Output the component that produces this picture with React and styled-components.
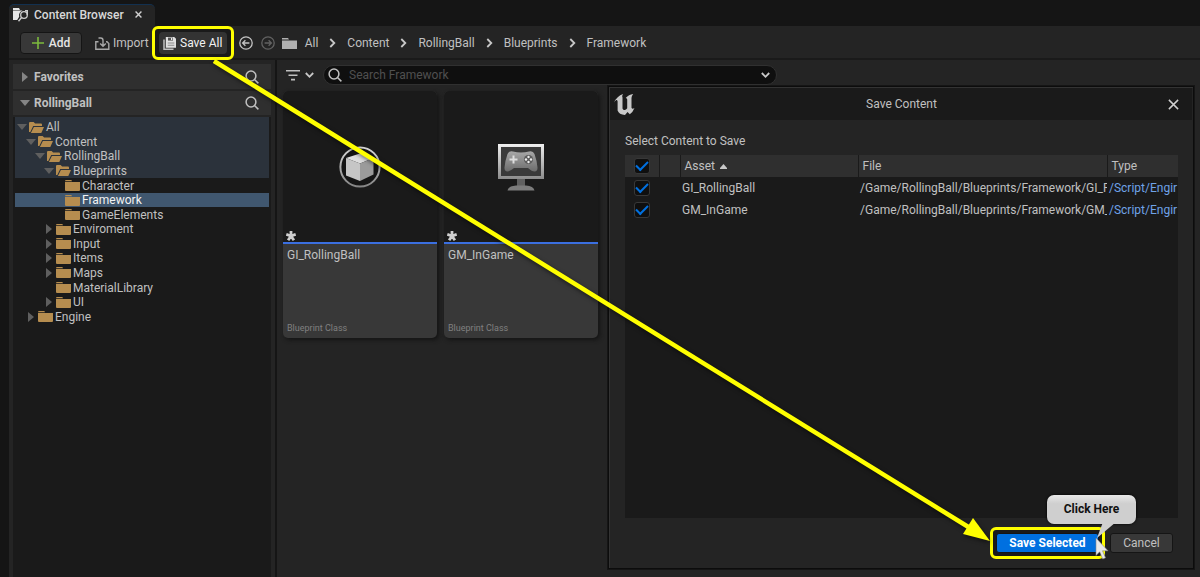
import React from "react";
import styled, { createGlobalStyle, css } from "styled-components";

const c = {
  black: "#151515",
  deep: "#1a1a1a",
  panel: "#242424",
  header: "#2f2f2f",
  text: "#c0c0c0",
  folder: "#b68d4f",
  blue: "#0070e0",
  mark: "#ffff00",
};

const GlobalStyle = createGlobalStyle`
  * { box-sizing: border-box; }
  body { margin: 0; background: ${c.black}; }
  body, button, input, table { font-family: Roboto, "Liberation Sans", sans-serif; font-size: 12px; line-height: 14px; color: ${c.text}; }
  svg { display: block; flex: none; }
`;

const Desktop = styled.div`
  position: relative;
  min-height: 100vh;
  display: flex;
  flex-direction: column;
  padding: 4px 0 0 9px;
  overflow: hidden;
`;
const TabStrip = styled.header`
  display: flex;
  height: 22px;
`;
const Tab = styled.div`
  display: flex;
  align-items: center;
  width: 146px;
  padding: 0 13px 2px 4px;
  gap: 5px;
  background: ${c.panel};
  border-top: 1px solid #12304f;
  border-radius: 5px 5px 0 0;
  color: #d8d8d8;
  font-weight: 500;
`;
const PlainButton = styled.button`
  display: flex;
  align-items: center;
  padding: 0;
  border: 0;
  background: none;
  color: inherit;
  ${(p) => p.$push && css`margin-left: auto;`}
`;
const Panel = styled.div`
  flex: 1;
  display: flex;
  flex-direction: column;
  background: ${c.panel};
`;
const Toolbar = styled.nav`
  display: flex;
  align-items: center;
  height: 34px;
  padding: 2px 11px 0;
  border-bottom: 2px solid ${c.deep};
`;
const ToolButton = styled.button`
  display: flex;
  align-items: center;
  justify-content: center;
  gap: 3px;
  height: 22px;
  padding: 0 2px 0 12px;
  border: 1px solid transparent;
  border-radius: 4px;
  background: none;
  color: ${c.text};
  ${(p) => p.$raised && css`
    width: 62px;
    gap: 5px;
    padding: 0;
    background: #383838;
    border-color: #151515;
    color: #e6e6e6;
    font-weight: 500;
  `}
  ${(p) => p.$active && css`
    width: 68px;
    gap: 4px;
    padding: 0;
    background: #333;
    color: #f2f2f2;
  `}
`;
const Highlight = styled.div`
  position: relative;
  flex: none;
  padding: ${(p) => p.$pad};
  border: 3px solid ${c.mark};
  border-radius: 6px;
  background: ${c.deep};
`;
const HistoryButtons = styled.div`
  display: flex;
  gap: 8px;
  margin: 0 7px 0 5px;
`;
const Crumbs = styled.div`
  display: flex;
  align-items: center;
  gap: 10px;
  margin-left: 8px;
`;
const Crumb = styled.a`
  color: ${c.text};
  text-decoration: none;
`;
const Body = styled.div`
  flex: 1;
  display: flex;
`;
const Sidebar = styled.aside`
  display: flex;
  flex-direction: column;
  width: 262px;
  margin: 4px 0 0 4px;
  padding-right: 4px;
`;
const Section = styled.div`
  display: flex;
  align-items: center;
  gap: 4px;
  height: ${(p) => p.$height};
  margin-bottom: 2px;
  padding: 0 12px 0 7px;
  background: ${c.header};
  font-weight: 700;
`;
const TreeWell = styled.div`
  flex: 1;
  padding: 0 2px;
  background: ${c.deep};
`;
const Tree = styled.ul`
  display: grid;
  grid-auto-rows: 1fr;
  height: 207px;
  margin: 0;
  padding: 0;
  border-top: 3px solid #2b323b;
  list-style: none;
`;
const TreeItem = styled.li`
  display: flex;
  align-items: center;
  gap: 2px;
  padding-left: ${(p) => 2 + p.$depth * 9}px;
  background: ${(p) => (p.$state === "open" ? "#2b323b" : p.$state === "current" ? "#40576f" : "none")};
  color: ${(p) => (p.$state === "current" ? "#f2f2f2" : c.text)};
`;
const Twist = styled.span`
  width: 10px;
  display: flex;
`;
const Content = styled.main`
  flex: 1;
  border-left: 2px solid ${c.black};
  padding: 5px 6px;
`;
const FilterBar = styled.div`
  display: flex;
  align-items: center;
  gap: 5px;
  height: 20px;
  padding-left: 3px;
`;
const SearchBox = styled.label`
  display: flex;
  align-items: center;
  gap: 7px;
  width: 454px;
  height: 20px;
  margin-left: 4px;
  padding: 0 6px 0 4px;
  border: 1px solid #303030;
  border-radius: 10px;
  background: #0f0f0f;
`;
const SearchInput = styled.input`
  flex: 1;
  min-width: 0;
  padding: 0;
  border: 0;
  outline: 0;
  background: none;
  &::placeholder { color: #505050; opacity: 1; }
`;
const Tiles = styled.div`
  display: flex;
  gap: 7px;
  margin-top: 6px;
`;
const Tile = styled.article`
  display: flex;
  flex-direction: column;
  width: 154px;
  height: 247px;
  border-radius: 5px;
  background: #383838;
  box-shadow: 2px 2px 4px #141414;
  overflow: hidden;
`;
const Thumb = styled.div`
  display: grid;
  justify-items: center;
  height: 153px;
  padding: 49px 3px 1px;
  background: ${c.deep};
  border-bottom: 2px solid #3b6fe0;
`;
const Dirty = styled.span`
  align-self: end;
  justify-self: start;
`;
const TileText = styled.div`
  flex: 1;
  display: flex;
  flex-direction: column;
  justify-content: space-between;
  padding: 4px;
`;
const Kind = styled.small`
  font-size: 9px;
  line-height: 11px;
  color: #808080;
`;
const Dialog = styled.section`
  position: absolute;
  top: 86px;
  right: 6px;
  bottom: 8px;
  left: 608px;
  display: flex;
  flex-direction: column;
  border: 1px solid #0c0c0c;
  outline: 1px solid #151515;
  background: ${c.panel};
  box-shadow: inset 1px 1px #333;
`;
const TitleBar = styled.header`
  display: grid;
  grid-template-columns: 34px 1fr 24px;
  align-items: center;
  height: 32px;
  margin: 1px;
  padding: 0 13px 0 4px;
  background: ${c.deep};
  text-align: center;
`;
const DialogBody = styled.div`
  flex: 1;
  display: flex;
  flex-direction: column;
  padding: 13px 15px 0 16px;
`;
const TableWell = styled.div`
  flex: 1;
  margin-top: 7px;
  background: ${c.deep};
`;
const Table = styled.table`
  width: 100%;
  table-layout: fixed;
  border-collapse: collapse;
`;
const Th = styled.th`
  width: ${(p) => p.$width};
  height: 22px;
  padding: 0 0 0 4px;
  background: ${c.header};
  border-right: 1px solid ${c.deep};
  font-weight: 400;
  text-align: left;
  &:last-child { border-right: 0; }
`;
const Td = styled.td`
  height: 22px;
  padding: 0 0 0 2px;
  overflow: hidden;
  white-space: nowrap;
`;
const Link = styled.a`
  color: #6fa3e8;
  text-decoration: none;
`;
const Check = styled.input.attrs({ type: "checkbox", defaultChecked: true })`
  appearance: none;
  display: grid;
  place-items: center;
  width: 16px;
  height: 16px;
  margin: 0 0 0 ${(p) => (p.$head ? "5px" : "7px")};
  border: 1px solid #383838;
  border-radius: 3px;
  background: #0f0f0f;
  &:checked::after {
    content: "";
    width: 10px;
    height: 5px;
    margin-bottom: 3px;
    border: solid ${c.blue};
    border-width: 0 0 2px 2px;
    transform: rotate(-45deg);
  }
`;
const Sorted = styled.span`
  display: flex;
  align-items: center;
  gap: 5px;
`;
const DialogFooter = styled.footer`
  display: flex;
  justify-content: flex-end;
  align-items: center;
  gap: 5px;
  height: 50px;
  padding-right: 20px;
`;
const DialogButton = styled.button`
  display: block;
  height: 20px;
  width: ${(p) => (p.$primary ? "103px" : "63px")};
  padding: 0;
  border: 1px solid #151515;
  border-radius: 3px;
  background: ${(p) => (p.$primary ? c.blue : "#383838")};
  color: ${(p) => (p.$primary ? "#fff" : c.text)};
  font-weight: ${(p) => (p.$primary ? 700 : 400)};
`;
const Callout = styled.div`
  position: absolute;
  left: 54px;
  bottom: 32px;
  width: 89px;
  height: 29px;
  border-radius: 7px;
  background: linear-gradient(#e8e8e8, #cfcfcf 30%, #cfcfcf);
  box-shadow: 0 0 3px #000;
  color: #111;
  font-weight: 700;
  line-height: 28px;
  text-align: center;
`;
const Tail = styled.svg`
  position: absolute;
  left: 104px;
  bottom: 18px;
`;
const Pointer = styled.svg`
  position: absolute;
  left: 102px;
  top: 8px;
`;
const Arrow = styled.svg`
  position: absolute;
  inset: 0;
  width: 100%;
  height: 100%;
  pointer-events: none;
  filter: drop-shadow(1px 2px 2px #0008);
`;

const Magnifier = () => (
  <svg width="14" height="14" viewBox="0 0 14 14" fill="none" stroke="#c0c0c0" strokeWidth="1.5">
    <circle cx="6" cy="6" r="4.9" /><path d="M9.5 9.5 13.4 13.4" />
  </svg>
);
const Chevron = ({ down, size = 9 }) => (
  <svg width={size} height="10" viewBox="0 0 9 10" fill="none" stroke="#c8c8c8" strokeWidth="1.8">
    <path d={down ? "M.8 3 4.5 6.8 8.2 3" : "M2.3 1 6.3 5 2.3 9"} />
  </svg>
);
const Triangle = ({ open, big }) => (
  <svg width="10" height="10" viewBox="0 0 10 10" fill={big ? "#858585" : "#5f5f5f"}>
    <path d={open ? "M0 2h10L5 8z" : "M2 0v10L8 5z"} />
  </svg>
);
const Folder = ({ open }) => (
  <svg width="15" height="11" viewBox="0 0 15 11" fill={c.folder}>
    {open ? (
      <path d="M0 10V1.2Q0 0 1 0h3.6l1.5 1.6H12q1 0 1 1V4H4.2L1.3 10zM1.9 11 4.9 5H15l-2.7 6z" />
    ) : (
      <path d="M0 2h15v8q0 1-1 1H1q-1 0-1-1zM1 0h5.4L7 1.2H0Q0 0 1 0z" />
    )}
  </svg>
);
const BrowserIcon = () => (
  <svg width="16" height="14" viewBox="0 0 16 14">
    <path fill="#e6e6e6" d="M0 0h6l1 2h-7zM0 2.600h9.500A5 5 0 0 0 6.200 8.800L4.200 12H0z" />
    <circle cx="11" cy="7" r="3.300" fill="none" stroke="#ccc" strokeWidth="1.300" />
    <path d="M8.800 9.300 5.500 13.200M12 2.700h2.300V7" fill="none" stroke="#ccc" strokeWidth="1.400" />
  </svg>
);
const CloseX = ({ size, weight }) => (
  <svg width={size} height={size} viewBox="0 0 10 10" stroke="#d0d0d0" strokeWidth={weight}>
    <path d="M.8.8 9.2 9.2M9.2.8.8 9.2" />
  </svg>
);
const PlusIcon = () => (
  <svg width="12" height="12" viewBox="0 0 12 12" stroke="#7cba3d" strokeWidth="1.6"><path d="M6 0v12M0 6h12" /></svg>
);
const ImportIcon = () => (
  <svg width="15" height="13" viewBox="0 0 15 13" fill="none" stroke="#a8a8a8" strokeWidth="1.4">
    <path d="M3.5 4.700H.8v7.600h13V6.500L12 4.700h-1M3.500 1h2.200Q8 1 8 3.500V9M5.200 6.500 8 9.300l2.800-2.800" />
  </svg>
);
const SaveIcon = () => (
  <svg width="13" height="13" viewBox="0 0 13 13">
    <path d="M1 2.5v9.7h9.5" fill="none" stroke="#c0c0c0" strokeWidth="1.5" />
    <path d="M2.8 0h8.4L13 1.8v9H2.8z" fill="#e0e0e0" />
    <path d="M5 .6h5v3H5z" fill="#555" /><path d="M8 1h1.300v2H8z" fill="#e8e8e8" /><path d="M4.700 5.500h6.600v1H4.700zM4.700 7.700h6.600v1H4.700z" fill="#8a8a8a" />
  </svg>
);
const HistoryIcon = ({ forward }) => (
  <svg width="14" height="14" viewBox="0 0 14 14" fill="none" stroke={forward ? "#626262" : "#c4c4c4"} strokeWidth="1.3">
    <circle cx="7" cy="7" r="6.2" />
    <path d={forward ? "M3.6 7h6.6M7.6 4.2 10.4 7 7.6 9.8" : "M10.4 7H3.8M6.4 4.2 3.6 7l2.8 2.8"} />
  </svg>
);
const FilterIcon = () => (
  <svg width="14" height="11" viewBox="0 0 14 11" fill="#c0c0c0"><path d="M0 0h14v1.6H0zM2.5 4.4h9V6h-9zM5 8.8h4v1.6H5z" /></svg>
);
const Asterisk = () => (
  <svg width="10" height="10" viewBox="0 0 10 10" stroke="#cfcfcf" strokeWidth="2.8">
    <path d="M5 5V0M5 5 .3 3.4M5 5l4.7-1.6M5 5 2.1 9.2M5 5l2.9 4.2" />
  </svg>
);
const CubeIcon = () => (
  <svg width="42" height="54" viewBox="0 0 42 54">
    <defs><linearGradient id="ring" x2="0" y2="1"><stop stopColor="#d8d8d8" /><stop offset="1" stopColor="#858585" /></linearGradient></defs>
    <circle cx="21" cy="27" r="19.6" fill="#151515" stroke="url(#ring)" strokeWidth="2" />
    <path d="M7 18 21 13.500 34.500 18 21 23.500z" fill="#dedede" />
    <path d="M7 18 21 23.500V41L7 35.500z" fill="#c6c6c6" />
    <path d="M34.500 18 21 23.500V41l13.500-6.500z" fill="#9b9b9b" />
  </svg>
);
const GameIcon = () => (
  <svg width="46" height="54" viewBox="0 0 46 54">
    <defs>
      <linearGradient id="frame" x2="0" y2="1"><stop stopColor="#f0f0f0" /><stop offset="1" stopColor="#8c8c8c" /></linearGradient>
      <linearGradient id="pad" x2="0" y2="1"><stop stopColor="#a8a8a8" /><stop offset="1" stopColor="#6c6c6c" /></linearGradient>
    </defs>
    <path d="M19 39h8v7h-8z" fill="#606060" />
    <path d="M9.500 50.500q1-4.500 8.500-5h10q7.500.5 8.500 5z" fill="#7c7c7c" />
    <path d="M0 4h46v35H0z" fill="url(#frame)" />
    <path d="M3 7h40v29H3z" fill="#3a3a3a" />
    <path d="M15 11.500q8 2 16 0 4-1 5.500 2.500 2.500 7 3 13.500.2 3.500-3 4-2.500 0-6.500-3.500H16q-4 3.500-6.500 3.500-3.200-.5-3-4 .5-6.500 3-13.500 1.500-3.500 5.500-2.500z" fill="url(#pad)" />
    <path d="M15.500 15.500v8M11.500 19.500h8" stroke="#ddd" strokeWidth="2" />
    <circle cx="30.500" cy="19.500" r="4.500" fill="#5c5c5c" />
    <g fill="#eee"><circle cx="30.500" cy="17" r="1.200" /><circle cx="30.500" cy="22" r="1.200" /><circle cx="28" cy="19.500" r="1.200" /><circle cx="33" cy="19.500" r="1.200" /></g>
  </svg>
);
const UnrealLogo = () => (
  <svg width="22" height="21" viewBox="0 0 22 21" fill="#c8c8c8">
    <path d="M0 8.500Q3 2 9 0 7.500 2 8.500 3.500V14.500q.8 2 2.500 1.500 1.500-.5 2.200-1.700V5.500q0-1.500-1.500-1.500 3-3.500 7.500-4-1.700 2-1.700 4v9.800q.8 1.800 3 .2-1.500 4-4.700 6.200L13.500 18l-2.500 3Q5 20.500 3.600 16.500V7.500Q3.500 5.500 2.300 6 1 6.700 0 8.500z" />
  </svg>
);

const tree = [
  ["All", 0, "down", "open"],
  ["Content", 1, "down", "open"],
  ["RollingBall", 2, "down", "open"],
  ["Blueprints", 3, "down", "open"],
  ["Character", 4],
  ["Framework", 4, null, "current"],
  ["GameElements", 4],
  ["Enviroment", 3, "right"],
  ["Input", 3, "right"],
  ["Items", 3, "right"],
  ["Maps", 3, "right"],
  ["MaterialLibrary", 3],
  ["UI", 3, "right"],
  ["Engine", 1, "right"],
];
const crumbs = ["All", "Content", "RollingBall", "Blueprints", "Framework"];
const assets = [
  { name: "GI_RollingBall", icon: <CubeIcon />, file: "/Game/RollingBall/Blueprints/Framework/GI_R" },
  { name: "GM_InGame", icon: <GameIcon />, file: "/Game/RollingBall/Blueprints/Framework/GM_" },
];

export default function App() {
  return (
    <Desktop>
      <GlobalStyle />
      <TabStrip>
        <Tab>
          <BrowserIcon />
          Content Browser
          <PlainButton $push aria-label="Close tab"><CloseX size={7} weight={2} /></PlainButton>
        </Tab>
      </TabStrip>
      <Panel>
        <Toolbar>
          <ToolButton $raised><PlusIcon />Add</ToolButton>
          <ToolButton><ImportIcon />Import</ToolButton>
          <Highlight $pad="3px 4px">
            <ToolButton $active><SaveIcon />Save All</ToolButton>
          </Highlight>
          <HistoryButtons>
            <PlainButton aria-label="Back"><HistoryIcon /></PlainButton>
            <PlainButton aria-label="Forward"><HistoryIcon forward /></PlainButton>
          </HistoryButtons>
          <svg width="15" height="11" viewBox="0 0 15 11" fill="#b0b0b0"><path d="M0 2.500h15V11H0zM0 0h6l1 1.600H0z" /></svg>
          <Crumbs>
            {crumbs.map((name, i) => (
              <React.Fragment key={name}>
                {i > 0 && <Chevron />}
                <Crumb href="#">{name}</Crumb>
              </React.Fragment>
            ))}
          </Crumbs>
        </Toolbar>
        <Body>
          <Sidebar>
            <Section $height="25px">
              <Triangle big />Favorites
              <PlainButton $push aria-label="Search favorites"><Magnifier /></PlainButton>
            </Section>
            <Section $height="24px">
              <Triangle big open />RollingBall
              <PlainButton $push aria-label="Search folders"><Magnifier /></PlainButton>
            </Section>
            <TreeWell>
              <Tree>
                {tree.map(([name, depth, twist, state]) => (
                  <TreeItem key={name} $depth={depth} $state={state}>
                    <Twist>{twist && <Triangle open={twist === "down"} />}</Twist>
                    <Folder open={state === "open"} />
                    {name}
                  </TreeItem>
                ))}
              </Tree>
            </TreeWell>
          </Sidebar>
          <Content>
            <FilterBar>
              <FilterIcon />
              <Chevron down />
              <SearchBox>
                <Magnifier />
                <SearchInput aria-label="Search" placeholder="Search Framework" />
                <Chevron down />
              </SearchBox>
            </FilterBar>
            <Tiles>
              {assets.map((a) => (
                <Tile key={a.name}>
                  <Thumb>{a.icon}<Dirty><Asterisk /></Dirty></Thumb>
                  <TileText>{a.name}<Kind>Blueprint Class</Kind></TileText>
                </Tile>
              ))}
            </Tiles>
          </Content>
        </Body>
      </Panel>
      <Dialog role="dialog" aria-label="Save Content">
        <TitleBar>
          <UnrealLogo />
          Save Content
          <PlainButton $push aria-label="Close"><CloseX size={11} weight={1.3} /></PlainButton>
        </TitleBar>
        <DialogBody>
          Select Content to Save
          <TableWell>
            <Table>
              <thead>
                <tr>
                  <Th $width="34px"><Check $head aria-label="Select all" /></Th>
                  <Th $width="21px" />
                  <Th $width="178px"><Sorted>Asset<svg width="7" height="5" viewBox="0 0 7 5" fill="#c8c8c8"><path d="M3.500 0 7 4v1H0V4z" /></svg></Sorted></Th>
                  <Th>File</Th>
                  <Th $width="71px">Type</Th>
                </tr>
              </thead>
              <tbody>
                {assets.map((a) => (
                  <tr key={a.name}>
                    <Td><Check aria-label={a.name} /></Td>
                    <Td />
                    <Td>{a.name}</Td>
                    <Td>{a.file}</Td>
                    <Td><Link href="#">/Script/Engir</Link></Td>
                  </tr>
                ))}
              </tbody>
            </Table>
          </TableWell>
        </DialogBody>
        <DialogFooter>
          <Highlight $pad="3px">
            <DialogButton $primary>Save Selected</DialogButton>
            <Callout>Click Here</Callout>
            <Tail width="22" height="16" viewBox="0 0 22 16" fill="#cfcfcf"><path d="M6 0h13L0 16z" /></Tail>
            <Pointer width="14" height="22" viewBox="0 0 14 22"><path d="M1 0v17.500l3.700-3.700 3 7.200 2.800-1.200-3-7H13z" fill="#e8e8e8" stroke="#888" strokeWidth=".6" /></Pointer>
          </Highlight>
          <DialogButton>Cancel</DialogButton>
        </DialogFooter>
      </Dialog>
      <Arrow viewBox="0 0 1200 577" preserveAspectRatio="none">
        <path d="M214 61 970 528" stroke={c.mark} strokeWidth="4.500" />
        <path d="M973 518 990 541 963 534z" fill={c.mark} />
      </Arrow>
    </Desktop>
  );
}
